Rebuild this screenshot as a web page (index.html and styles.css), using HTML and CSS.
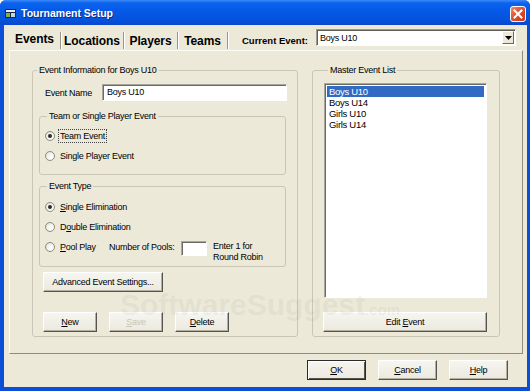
FILE: index.html
```html
<!DOCTYPE html>
<html>
<head>
<meta charset="utf-8">
<link rel="stylesheet" href="styles.css">
</head>
<body>
<div class="window">
  <div class="titlebar">
    <svg class="appicon" width="11" height="9" viewBox="0 0 11 9"><rect x="0" y="0" width="11" height="9" fill="#1d2b3c"/><rect x="1" y="1" width="9" height="2" fill="#e8eef6"/><rect x="1" y="4" width="4" height="4" fill="#7fb24a"/><rect x="6" y="4" width="4" height="4" fill="#c8d4e2"/></svg>
    <span class="title">Tournament Setup</span>
    <div class="close"><svg width="10" height="10" viewBox="0 0 10 10"><path d="M1.5 1.5 L8.5 8.5 M8.5 1.5 L1.5 8.5" stroke="#fff" stroke-width="2" stroke-linecap="square"/></svg></div>
  </div>
  <div class="client">
    <div class="tabrow">
      <div class="tab active t-events">Events</div>
      <div class="tab t-locations">Locations</div>
      <div class="tab t-players">Players</div>
      <div class="tab t-teams">Teams</div>
      <div class="current">Current Event:</div>
      <div class="combo"><span class="combo-text">Boys U10</span><div class="drop"><svg width="7" height="4" viewBox="0 0 7 4"><path d="M0 0 H7 L3.5 4 Z" fill="#000"/></svg></div></div>
    </div>
    <div class="panel">
      <fieldset class="group gleft">
        <legend>Event Information for Boys U10</legend>
        <div class="namerow">
          <span class="namelabel">Event Name</span>
          <div class="field namefield">Boys U10</div>
        </div>
        <fieldset class="sub sub1">
          <legend>Team or Single Player Event</legend>
          <div class="opt"><span class="radio checked"></span><span class="focus">Team Event</span></div>
          <div class="opt"><span class="radio"></span><span>Single Player Event</span></div>
        </fieldset>
        <fieldset class="sub sub2">
          <legend>Event Type</legend>
          <div class="opt"><span class="radio checked"></span><span><u>S</u>ingle Elimination</span></div>
          <div class="opt"><span class="radio"></span><span>D<u>o</u>uble Elimination</span></div>
          <div class="poolrow">
            <div class="opt poolopt"><span class="radio"></span><span><u>P</u>ool Play</span></div>
            <span class="poolslabel">Number of Pools:</span>
            <div class="field poolfield"></div>
            <div class="hint">Enter 1 for<br>Round Robin</div>
          </div>
        </fieldset>
        <div class="btn adv"><span>Advanced Event Settings...</span></div>
        <div class="btnrow">
          <div class="btn small"><span><u>N</u>ew</span></div>
          <div class="btn small disabled"><span><u>S</u>ave</span></div>
          <div class="btn small"><span><u>D</u>elete</span></div>
        </div>
      </fieldset>
      <fieldset class="group gright">
        <legend>Master Event List</legend>
        <div class="list">
          <div class="item sel">Boys U10</div>
          <div class="item">Boys U14</div>
          <div class="item">Girls U10</div>
          <div class="item">Girls U14</div>
        </div>
        <div class="btn edit"><span>Edit <u>E</u>vent</span></div>
      </fieldset>
    </div>
    <div class="footer">
      <div class="btn foot default"><span><u>O</u>K</span></div>
      <div class="btn foot"><span><u>C</u>ancel</span></div>
      <div class="btn foot"><span><u>H</u>elp</span></div>
    </div>
  </div>
  <div class="watermark">SoftwareSuggest<span class="wm-com">.com</span></div>
</div>
</body>
</html>
```
FILE: styles.css
```css
* { box-sizing: border-box; }
body { margin: 0; background: #ffffff; }

.window {
  position: relative;
  width: 530px;
  height: 391px;
  display: flex;
  flex-direction: column;
  background: #0b4fd9;
  font-family: "Liberation Sans", Arial, sans-serif;
  font-size: 9px;
  letter-spacing: -0.25px;
  color: #000;
  overflow: hidden;
  border-radius: 6px 6px 0 0;
  white-space: nowrap;
}

.titlebar {
  height: 25px;
  flex: none;
  display: flex;
  align-items: center;
  padding: 0 4px 0 5px;
  background: linear-gradient(#3d8bfa 0%, #0a63ee 12%, #0459e6 45%, #0452db 80%, #0a48cc 100%);
}
.appicon { flex: none; margin-top: 2px; }
.title {
  margin-left: 5px;
  color: #fff;
  font-weight: bold;
  font-size: 10.5px;
  letter-spacing: 0;
  text-shadow: 1px 1px 0 #0b2c8a;
}
.close {
  margin-left: auto;
  margin-top: 3px;
  width: 16px;
  height: 16px;
  border: 1px solid #fff;
  border-radius: 3px;
  background: linear-gradient(135deg, #f08a6c 0%, #e0512d 45%, #c6361a 100%);
  display: flex;
  align-items: center;
  justify-content: center;
}

.client {
  flex: 1;
  margin: 0 3px 4px 4px;
  background: #ece9d8;
  display: flex;
  flex-direction: column;
}

.tabrow {
  height: 25px;
  flex: none;
  display: flex;
  align-items: flex-start;
  padding-left: 5px;
}
.tab {
  height: 17px;
  margin-top: 7px;
  line-height: 18px;
  text-align: center;
  font-weight: bold;
  font-size: 12px;
  letter-spacing: -0.1px;
  border-right: 1px solid #99978a;
  box-shadow: 1px 0 0 #fff;
}
.tab.active { line-height: 15px; }
.t-events { width: 52px; }
.t-locations { width: 63px; }
.t-players { width: 54px; }
.t-teams { width: 50px; }
.current {
  width: 74px;
  margin-left: 14px;
  margin-top: 7px;
  line-height: 18px;
  font-weight: bold;
  font-size: 9.5px;
  letter-spacing: 0;
}
.combo {
  width: 200px;
  height: 17px;
  margin-top: 4px;
  background: #fff;
  border: 1px solid;
  border-color: #9c9a8e #fff #fff #9c9a8e;
  box-shadow: inset 1px 1px 0 #5e5d56;
  display: flex;
  align-items: center;
  padding: 0 1px 0 3px;
}
.combo-text { flex: 1; }
.drop {
  width: 12px;
  height: 13px;
  background: #ece9d8;
  border: 1px solid;
  border-color: #fff #6a6960 #6a6960 #fff;
  display: flex;
  align-items: center;
  justify-content: center;
}

.panel {
  flex: none;
  width: 514px;
  height: 304px;
  margin-left: 5px;
  border: 1px solid;
  border-color: #fbfbf8 #8e8c80 #8e8c80 #fbfbf8;
  padding: 13px 22px 16px 22px;
  display: flex;
  gap: 14px;
}

fieldset { margin: 0; padding: 0; min-width: 0; }
legend { padding: 0 2px; line-height: 12px; }

.group {
  border: 1px solid #c9c6b6;
  border-radius: 3px;
}
.group > legend { margin-left: 4px; }
.gleft { width: 266px; }
.gright {
  width: 188px;
  display: flex;
  flex-direction: column;
  padding: 0 12px 4px 11px;
}

.namerow {
  display: flex;
  align-items: center;
  margin: 8px 10px 0 12px;
}
.namelabel { width: 57px; }
.field {
  background: #fff;
  border: 1px solid;
  border-color: #a9a79c #fff #fff #a9a79c;
  box-shadow: inset 1px 1px 0 #6c6b63;
}
.namefield {
  flex: 1;
  height: 17px;
  line-height: 15px;
  padding-left: 4px;
}

.sub {
  margin: 9px 11px 0 6px;
  border: 1px solid #c9c6b6;
  border-radius: 3px;
  padding-left: 5px;
}
.sub > legend { margin-left: 2px; }
.sub1 { padding-top: 7px; padding-bottom: 11px; }
.sub2 { margin-top: 5px; padding-top: 8px; padding-bottom: 4px; }

.opt {
  height: 14px;
  display: flex;
  align-items: center;
  gap: 5px;
}
.opt + .opt, .opt + .poolrow { margin-top: 6px; }
.radio {
  position: relative;
  flex: none;
  width: 10px;
  height: 10px;
  border-radius: 50%;
  border: 1px solid #8d8c86;
  background: radial-gradient(circle at 65% 65%, #ffffff 0%, #f2f1ea 50%, #d9d7cc 100%);
}
.radio.checked::after {
  content: "";
  position: absolute;
  left: 2px;
  top: 2px;
  width: 4px;
  height: 4px;
  border-radius: 50%;
  background: #2a2a2a;
}
.focus { outline: 1px dotted #444; outline-offset: 1px; }

.poolrow {
  display: flex;
  align-items: flex-start;
  height: 22px;
}
.poolopt { width: 64px; }
.poolslabel { width: 72px; line-height: 14px; }
.poolfield {
  width: 26px;
  height: 15px;
  margin-top: 1px;
  margin-right: 6px;
}
.hint { margin-top: 1px; line-height: 11px; }

.btn {
  height: 20px;
  display: flex;
  align-items: center;
  justify-content: center;
  background: linear-gradient(#f6f5ef, #ebe9df);
  border: 1px solid;
  border-color: #ffffff #55544e #55544e #ffffff;
  box-shadow: inset -1px -1px 0 #b3b0a2;
}
.adv { width: 120px; margin: 5px 0 0 10px; }
.btnrow {
  display: flex;
  gap: 12px;
  margin: 20px 0 0 10px;
}
.small { width: 54px; }
.disabled { color: #c9c6b6; }

.list {
  flex: 1;
  margin-top: 7px;
  background: #fff;
  border: 1px solid;
  border-color: #a9a79c #fff #fff #a9a79c;
  box-shadow: inset 1px 1px 0 #6c6b63;
  padding: 2px;
  font-size: 9.5px;
  letter-spacing: -0.3px;
}
.item { height: 11px; line-height: 11px; padding-left: 2px; }
.item.sel { background: #316ac5; color: #fff; }
.edit { width: 164px; margin: 14px 0 0 -1px; }

.footer {
  flex: 1;
  display: flex;
  justify-content: flex-end;
  gap: 12px;
  padding: 6px 19px 7px 0;
}
.foot { width: 59px; }
.default { border-color: #2a2a2a; box-shadow: inset 1px 1px 0 #fff, inset -1px -1px 0 #55544e; }

.watermark {
  position: absolute;
  left: 120px;
  top: 288px;
  font-weight: bold;
  font-size: 30px;
  letter-spacing: 0;
  color: rgba(90, 90, 90, 0.08);
  pointer-events: none;
}
.wm-com { font-size: 15px; }
```
